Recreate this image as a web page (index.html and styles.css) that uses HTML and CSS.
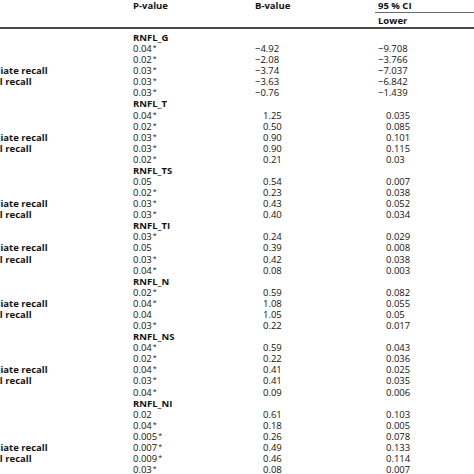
FILE: index.html
```html
<!DOCTYPE html>
<html>
<head>
<meta charset="utf-8">
<link rel="stylesheet" href="styles.css">
</head>
<body>
<div class="crop">
<table class="stats">
  <colgroup>
    <col class="c-label"><col class="c-p"><col class="c-b"><col class="c-low"><col class="c-up">
  </colgroup>
  <thead>
    <tr class="h1">
      <th rowspan="2"></th>
      <th rowspan="2">P-value</th>
      <th rowspan="2">B-value</th>
      <th colspan="2" class="ci">95 % CI</th>
    </tr>
    <tr class="h2">
      <th>Lower</th>
      <th>Upper</th>
    </tr>
  </thead>
  <tbody>
    <tr class="first"><td></td><td class="grp">RNFL_G</td><td></td><td></td><td></td></tr>
    <tr><td></td><td>0.04<span class="ast">*</span></td><td>−4.92</td><td>−9.708</td><td></td></tr>
    <tr><td></td><td>0.02<span class="ast">*</span></td><td>−2.08</td><td>−3.766</td><td></td></tr>
    <tr><td class="lab">Immediate recall</td><td>0.03<span class="ast">*</span></td><td>−3.74</td><td>−7.037</td><td></td></tr>
    <tr><td class="lab sub">Verbal recall</td><td>0.03<span class="ast">*</span></td><td>−3.63</td><td>−6.842</td><td></td></tr>
    <tr><td></td><td>0.03<span class="ast">*</span></td><td>−0.76</td><td>−1.439</td><td></td></tr>

    <tr><td></td><td class="grp">RNFL_T</td><td></td><td></td><td></td></tr>
    <tr><td></td><td>0.04<span class="ast">*</span></td><td class="pos">1.25</td><td class="pos">0.035</td><td></td></tr>
    <tr><td></td><td>0.02<span class="ast">*</span></td><td class="pos">0.50</td><td class="pos">0.085</td><td></td></tr>
    <tr><td class="lab">Immediate recall</td><td>0.03<span class="ast">*</span></td><td class="pos">0.90</td><td class="pos">0.101</td><td></td></tr>
    <tr><td class="lab sub">Verbal recall</td><td>0.03<span class="ast">*</span></td><td class="pos">0.90</td><td class="pos">0.115</td><td></td></tr>
    <tr><td></td><td>0.02<span class="ast">*</span></td><td class="pos">0.21</td><td class="pos">0.03</td><td></td></tr>

    <tr><td></td><td class="grp">RNFL_TS</td><td></td><td></td><td></td></tr>
    <tr><td></td><td>0.05</td><td class="pos">0.54</td><td class="pos">0.007</td><td></td></tr>
    <tr><td></td><td>0.02<span class="ast">*</span></td><td class="pos">0.23</td><td class="pos">0.038</td><td></td></tr>
    <tr><td class="lab">Immediate recall</td><td>0.03<span class="ast">*</span></td><td class="pos">0.43</td><td class="pos">0.052</td><td></td></tr>
    <tr><td class="lab sub">Verbal recall</td><td>0.03<span class="ast">*</span></td><td class="pos">0.40</td><td class="pos">0.034</td><td></td></tr>

    <tr><td></td><td class="grp">RNFL_TI</td><td></td><td></td><td></td></tr>
    <tr><td></td><td>0.03<span class="ast">*</span></td><td class="pos">0.24</td><td class="pos">0.029</td><td></td></tr>
    <tr><td class="lab">Immediate recall</td><td>0.05</td><td class="pos">0.39</td><td class="pos">0.008</td><td></td></tr>
    <tr><td class="lab sub">Verbal recall</td><td>0.03<span class="ast">*</span></td><td class="pos">0.42</td><td class="pos">0.038</td><td></td></tr>
    <tr><td></td><td>0.04<span class="ast">*</span></td><td class="pos">0.08</td><td class="pos">0.003</td><td></td></tr>

    <tr><td></td><td class="grp">RNFL_N</td><td></td><td></td><td></td></tr>
    <tr><td></td><td>0.02<span class="ast">*</span></td><td class="pos">0.59</td><td class="pos">0.082</td><td></td></tr>
    <tr><td class="lab">Immediate recall</td><td>0.04<span class="ast">*</span></td><td class="pos">1.08</td><td class="pos">0.055</td><td></td></tr>
    <tr><td class="lab sub">Verbal recall</td><td>0.04</td><td class="pos">1.05</td><td class="pos">0.05</td><td></td></tr>
    <tr><td></td><td>0.03<span class="ast">*</span></td><td class="pos">0.22</td><td class="pos">0.017</td><td></td></tr>

    <tr><td></td><td class="grp">RNFL_NS</td><td></td><td></td><td></td></tr>
    <tr><td></td><td>0.04<span class="ast">*</span></td><td class="pos">0.59</td><td class="pos">0.043</td><td></td></tr>
    <tr><td></td><td>0.02<span class="ast">*</span></td><td class="pos">0.22</td><td class="pos">0.036</td><td></td></tr>
    <tr><td class="lab">Immediate recall</td><td>0.04<span class="ast">*</span></td><td class="pos">0.41</td><td class="pos">0.025</td><td></td></tr>
    <tr><td class="lab sub">Verbal recall</td><td>0.03<span class="ast">*</span></td><td class="pos">0.41</td><td class="pos">0.035</td><td></td></tr>
    <tr><td></td><td>0.04<span class="ast">*</span></td><td class="pos">0.09</td><td class="pos">0.006</td><td></td></tr>

    <tr><td></td><td class="grp">RNFL_NI</td><td></td><td></td><td></td></tr>
    <tr><td></td><td>0.02</td><td class="pos">0.61</td><td class="pos">0.103</td><td></td></tr>
    <tr><td></td><td>0.04<span class="ast">*</span></td><td class="pos">0.18</td><td class="pos">0.005</td><td></td></tr>
    <tr><td></td><td>0.005<span class="ast">*</span></td><td class="pos">0.26</td><td class="pos">0.078</td><td></td></tr>
    <tr><td class="lab">Immediate recall</td><td>0.007<span class="ast">*</span></td><td class="pos">0.49</td><td class="pos">0.133</td><td></td></tr>
    <tr><td class="lab sub">Verbal recall</td><td>0.009<span class="ast">*</span></td><td class="pos">0.46</td><td class="pos">0.114</td><td></td></tr>
    <tr><td></td><td>0.03<span class="ast">*</span></td><td class="pos">0.08</td><td class="pos">0.007</td><td></td></tr>
  </tbody>
</table>
</div>
</body>
</html>
```

FILE: styles.css
```css
html, body {
  margin: 0;
  padding: 0;
  background: #ffffff;
}

.crop {
  width: 474px;
  height: 474px;
  overflow: hidden;
}

.stats {
  border-collapse: collapse;
  table-layout: fixed;
  width: 700px;
  margin-left: -36px;
  font-family: "Open Sans", "Noto Sans", sans-serif;
  font-size: 9.5px;
  color: #141212;
}

.c-label { width: 166px; }
.c-p { width: 122px; }
.c-b { width: 123px; }
.c-low { width: 150px; }
.c-up { width: 139px; }

.stats th,
.stats td {
  padding: 0 0 0 3px;
  text-align: left;
  white-space: nowrap;
  vertical-align: top;
}

.stats th {
  font-weight: 700;
  line-height: 11px;
}

.h1 th {
  padding-bottom: 1px;
}

.h1 th.ci {
  border-bottom: 1px solid #6a6a6a;
}

.h2 th {
  padding-top: 2px;
  padding-bottom: 1px;
  border-bottom: 2px solid #4a4a4a;
}

thead tr.h1 th[rowspan] {
  border-bottom: 2px solid #4a4a4a;
}

.stats td {
  line-height: 11.08px;
  height: 11.08px;
}

tr.first td {
  padding-top: 3px;
}

.grp,
.lab {
  font-weight: 700;
}

.lab.sub {
  padding-left: 8px;
}

.pos {
  padding-left: 11px !important;
}

.ast {
  font-size: 7px;
  line-height: 0;
  vertical-align: 2px;
  margin-left: 1px;
}
```
